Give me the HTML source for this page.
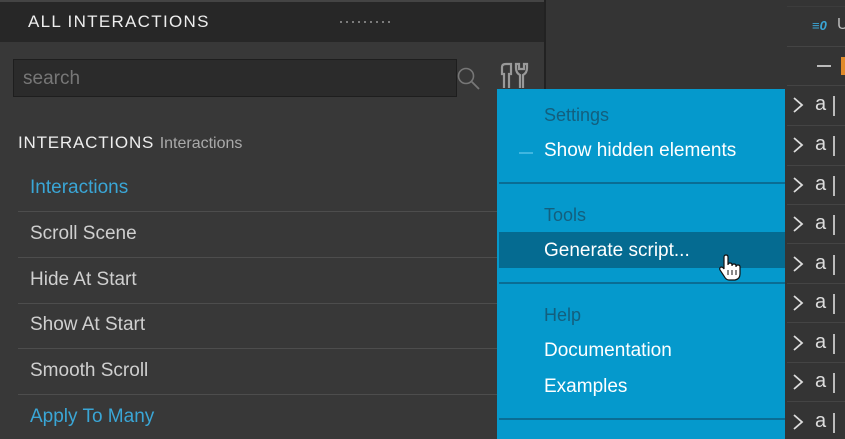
<!DOCTYPE html>
<html><head><meta charset="utf-8"><style>
*{margin:0;padding:0;box-sizing:border-box}
body{width:845px;height:439px;overflow:hidden;background:#343434;font-family:"Liberation Sans",sans-serif;position:relative}
.abs{position:absolute}
.left{left:0;top:0;width:544px;height:439px;background:#383838}
.hdr{left:0;top:0;width:544px;height:42px;background:#272727;border-top:2px solid #444}
.hdr span{position:absolute;left:28px;top:10px;color:#eee;font-size:17px;letter-spacing:1.3px}
.dots{left:338px;top:21px;width:54px;height:2px;background-image:radial-gradient(circle,#999 0.9px,transparent 1px);background-size:6px 2px}
.search{left:13px;top:59px;width:444px;height:38px;background:#2b2b2b;border:1px solid #1e1e1e}
.search span{position:absolute;left:9px;top:8px;color:#777;font-size:19px}
.item{position:absolute;left:30px;font-size:19px;color:#cfcfcf}
.sep{position:absolute;left:18px;width:480px;height:1px;background:#4d4d4d}
.menu{left:497px;top:89px;width:288px;height:350px;background:#0599cc}
.menu .t{position:absolute;left:47px;font-size:19px;color:#fff}
.menu .g{color:#135f7e}
.msep{position:absolute;left:2px;width:286px;height:2px;background:#0a6d94}
.right{left:787px;top:0;width:58px;height:439px}
.r{position:absolute;left:0;width:58px;height:30px;color:#ddd;font-size:20px}
.r svg{position:absolute;left:5px;top:6px}
.r .a{position:absolute;left:28px;top:3px}
.r .b{position:absolute;left:46px;top:6px;width:2px;height:20px;background:#bbb}
.rs{position:absolute;left:0;width:58px;height:1px;background:#444}
</style></head><body>
<div class="abs left"></div>
<div class="abs hdr"><span>ALL INTERACTIONS</span></div>
<div class="abs dots"></div>
<div class="abs" style="left:544px;top:0;width:2px;height:439px;background:#222"></div>
<div class="abs search"><span>search</span>
<svg style="position:absolute;left:442px;top:6px" width="26" height="26" viewBox="0 0 26 26"><circle cx="10" cy="10" r="7.5" fill="none" stroke="#777" stroke-width="1.6"/><line x1="15.5" y1="15.5" x2="23" y2="23" stroke="#777" stroke-width="1.8"/></svg></div>
<svg class="abs" style="left:500px;top:62px" width="34" height="30" viewBox="0 0 34 30"><path d="M4 26V12H2V5Q2 2 6 2H11V12H9V26" fill="none" stroke="#999" stroke-width="2.2"/><path d="M20 26V13Q16 11 16 6V2L19 2V7H24V2L27 2V6Q27 11 23 13V26" fill="none" stroke="#999" stroke-width="2.2"/></svg>
<div class="abs" style="left:18px;top:133px;font-size:17px;color:#eee;letter-spacing:0.8px">INTERACTIONS <span style="color:#aaa;font-size:16px;letter-spacing:0">Interactions</span></div>
<div class="item" style="top:177px;color:#3aa6d6">Interactions</div>
<div class="sep" style="top:211px"></div>
<div class="item" style="top:223px">Scroll Scene</div>
<div class="sep" style="top:257px"></div>
<div class="item" style="top:269px">Hide At Start</div>
<div class="sep" style="top:303px"></div>
<div class="item" style="top:314px">Show At Start</div>
<div class="sep" style="top:348px"></div>
<div class="item" style="top:360px">Smooth Scroll</div>
<div class="sep" style="top:394px"></div>
<div class="item" style="top:406px;color:#3aa6d6">Apply To Many</div>

<div class="abs right">
<div class="rs" style="top:6px;background:#3c3c3c"></div>
<div class="abs" style="left:25px;top:18px;color:#3aa6d6;font-style:italic;font-weight:bold;font-size:13px">≡0</div>
<div class="abs" style="left:50px;top:16px;color:#bbb;font-size:16px">U</div>
<div class="rs" style="top:46px"></div>
<div class="abs" style="left:30px;top:65px;width:14px;height:2px;background:#bbb"></div>
<div class="abs" style="left:54px;top:57px;width:4px;height:18px;background:#e08a2a"></div>
<div class="rs" style="top:85px"></div>
<div class="r" style="top:90px"><svg width="12" height="18"><path d="M2 2L10 9L2 16" fill="none" stroke="#ddd" stroke-width="1.8"/></svg><span class="a">a</span><i class="b"></i></div><div class="rs" style="top:125px"></div>
<div class="r" style="top:130px"><svg width="12" height="18"><path d="M2 2L10 9L2 16" fill="none" stroke="#ddd" stroke-width="1.8"/></svg><span class="a">a</span><i class="b"></i></div><div class="rs" style="top:165px"></div>
<div class="r" style="top:170px"><svg width="12" height="18"><path d="M2 2L10 9L2 16" fill="none" stroke="#ddd" stroke-width="1.8"/></svg><span class="a">a</span><i class="b"></i></div><div class="rs" style="top:204px"></div>
<div class="r" style="top:209px"><svg width="12" height="18"><path d="M2 2L10 9L2 16" fill="none" stroke="#ddd" stroke-width="1.8"/></svg><span class="a">a</span><i class="b"></i></div><div class="rs" style="top:243px"></div>
<div class="r" style="top:249px"><svg width="12" height="18"><path d="M2 2L10 9L2 16" fill="none" stroke="#ddd" stroke-width="1.8"/></svg><span class="a">a</span><i class="b"></i></div><div class="rs" style="top:283px"></div>
<div class="r" style="top:288px"><svg width="12" height="18"><path d="M2 2L10 9L2 16" fill="none" stroke="#ddd" stroke-width="1.8"/></svg><span class="a">a</span><i class="b"></i></div><div class="rs" style="top:322px"></div>
<div class="r" style="top:328px"><svg width="12" height="18"><path d="M2 2L10 9L2 16" fill="none" stroke="#ddd" stroke-width="1.8"/></svg><span class="a">a</span><i class="b"></i></div><div class="rs" style="top:362px"></div>
<div class="r" style="top:367px"><svg width="12" height="18"><path d="M2 2L10 9L2 16" fill="none" stroke="#ddd" stroke-width="1.8"/></svg><span class="a">a</span><i class="b"></i></div><div class="rs" style="top:401px"></div>
<div class="r" style="top:407px"><svg width="12" height="18"><path d="M2 2L10 9L2 16" fill="none" stroke="#ddd" stroke-width="1.8"/></svg><span class="a">a</span><i class="b"></i></div>
</div>

<div class="abs menu">
<div class="t g" style="top:16px;font-size:18px">Settings</div>
<div style="position:absolute;left:22px;top:63px;width:14px;height:2px;background:#3fb6e0"></div>
<div class="t" style="top:51px">Show hidden elements</div>
<div class="msep" style="top:93px"></div>
<div class="t g" style="top:116px;font-size:18px">Tools</div>
<div style="position:absolute;left:2px;top:143px;width:286px;height:36px;background:#056b91"></div>
<div class="t" style="top:151px">Generate script...</div>
<svg style="position:absolute;left:221px;top:165px" width="24" height="28" viewBox="0 0 24 28"><path d="M6 15V3Q6 1 8 1Q10 1 10 3V11Q10 9 12 9Q14 9 14 11V12Q14 10 16 10Q18 10 18 12V13Q18 11 20 11Q22 11 22 13V20Q22 25 17 26H11Q8 26 6 22L2 16Q1 14 3 13Q5 13 6 15Z" fill="#fff" stroke="#111" stroke-width="1.2"/><path d="M10 16V21M14 16V21M18 16V21" stroke="#111" stroke-width="1"/></svg>
<div class="msep" style="top:193px"></div>
<div class="t g" style="top:216px;font-size:18px">Help</div>
<div class="t" style="top:251px">Documentation</div>
<div class="t" style="top:287px">Examples</div>
<div class="msep" style="top:329px"></div>
</div>
</body></html>
